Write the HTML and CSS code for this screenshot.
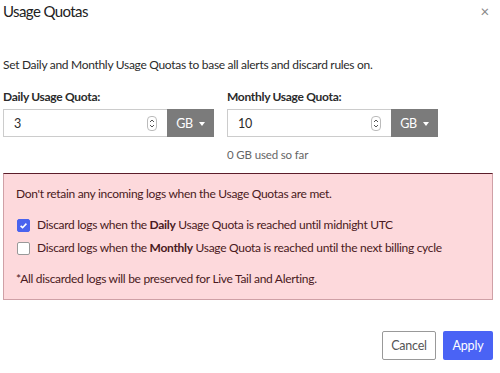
FILE: index.html
```html
<!DOCTYPE html>
<html lang="en">
<head>
    <meta charset="UTF-8">
    <title>Usage Quotas</title>
    <link rel="stylesheet" href="styles.css">
</head>
<body>
    <div class="modal">
        <div class="modal-header">
            <h2>Usage Quotas</h2>
            <span class="close">&times;</span>
        </div>

        <p class="intro">Set Daily and Monthly Usage Quotas to base all alerts and discard rules on.</p>

        <div class="quota-row">
            <div class="quota">
                <label>Daily Usage Quota:</label>
                <div class="input-group">
                    <div class="num-input">
                        <span>3</span>
                        <svg class="spin" width="10" height="15" viewBox="0 0 10 15">
                            <rect x="0.5" y="0.5" width="9" height="14" rx="3.5" fill="none" stroke="#bbb"/>
                            <path d="M3 6 L5 4 L7 6 M3 9 L5 11 L7 9" fill="none" stroke="#555" stroke-width="1"/>
                        </svg>
                    </div>
                    <button class="unit">GB <i class="caret"></i></button>
                </div>
            </div>
            <div class="quota">
                <label>Monthly Usage Quota:</label>
                <div class="input-group">
                    <div class="num-input">
                        <span>10</span>
                        <svg class="spin" width="10" height="15" viewBox="0 0 10 15">
                            <rect x="0.5" y="0.5" width="9" height="14" rx="3.5" fill="none" stroke="#bbb"/>
                            <path d="M3 6 L5 4 L7 6 M3 9 L5 11 L7 9" fill="none" stroke="#555" stroke-width="1"/>
                        </svg>
                    </div>
                    <button class="unit">GB <i class="caret"></i></button>
                </div>
                <div class="used">0 GB used so far</div>
            </div>
        </div>

        <div class="alert">
            <p>Don't retain any incoming logs when the Usage Quotas are met.</p>
            <div class="check-list">
                <div class="check">
                    <span class="box checked">
                        <svg width="9" height="9" viewBox="0 0 9 9"><path d="M1.6 4.8 L3.6 6.7 L7.4 2.6" fill="none" stroke="#fff" stroke-width="1.6"/></svg>
                    </span>
                    <span>Discard logs when the <b>Daily</b> Usage Quota is reached until midnight UTC</span>
                </div>
                <div class="check">
                    <span class="box"></span>
                    <span>Discard logs when the <b>Monthly</b> Usage Quota is reached until the next billing cycle</span>
                </div>
            </div>
            <p>*All discarded logs will be preserved for Live Tail and Alerting.</p>
        </div>

        <div class="actions">
            <button class="btn cancel">Cancel</button>
            <button class="btn apply">Apply</button>
        </div>
    </div>
</body>
</html>
```

FILE: styles.css
```css
body {
    margin: 0;
    background-color: #fff;
    font-family: Lato, "Liberation Sans", sans-serif;
    font-size: 12px;
    letter-spacing: -0.3px;
    color: #2b2b2b;
}

.modal {
    width: 490px;
    padding: 0 7px 0 3px;
}

.modal-header {
    display: flex;
    justify-content: space-between;
    align-items: center;
    height: 22px;
}

.modal-header h2 {
    margin: 0;
    font-size: 15px;
    letter-spacing: -0.6px;
    font-weight: normal;
    color: #222;
}

.close {
    font-size: 15px;
    color: #888;
    margin-right: 4px;
}

.intro {
    margin: 35px 0 0;
    line-height: 16px;
}

.quota-row {
    display: flex;
    gap: 13px;
    margin-top: 16px;
}

.quota label {
    display: block;
    font-weight: bold;
    line-height: 16px;
    margin-bottom: 4px;
}

.input-group {
    display: flex;
    height: 28px;
}

.num-input {
    width: 164px;
    box-sizing: border-box;
    border: 1px solid #ccc;
    border-right: none;
    display: flex;
    align-items: center;
    justify-content: space-between;
    padding: 0 10px 0 10px;
    font-size: 12.5px;
}

.spin {
    display: block;
}

.unit {
    width: 47px;
    border: none;
    background-color: #7b7b7b;
    color: #fff;
    font-family: inherit;
    font-size: 12.5px;
    letter-spacing: -0.3px;
    padding: 0;
}

.caret {
    display: inline-block;
    vertical-align: middle;
    margin-left: 3px;
    border-left: 3.5px solid transparent;
    border-right: 3.5px solid transparent;
    border-top: 4px solid #fff;
}

.used {
    font-size: 11.5px;
    letter-spacing: -0.15px;
    color: #666;
    margin-top: 11px;
}

.alert {
    margin-top: 12px;
    background-color: #fdd9dc;
    border: 1px solid #cfa0a6;
    border-top-color: #5b1d2a;
    padding: 12px 12px 12px;
    color: #4a1a22;
    line-height: 16px;
}

.alert p {
    margin: 0;
}

.check-list {
    margin: 15px 0 15px 1px;
    display: flex;
    flex-direction: column;
    gap: 7px;
}

.check {
    display: flex;
    align-items: center;
    gap: 7px;
}

.box {
    width: 13px;
    height: 13px;
    box-sizing: border-box;
    border: 1px solid #999;
    border-radius: 2px;
    background-color: #fff;
    display: flex;
    align-items: center;
    justify-content: center;
}

.box.checked {
    background-color: #4a63ee;
    border-color: #4a63ee;
}

.actions {
    display: flex;
    justify-content: flex-end;
    gap: 7px;
    margin-top: 31px;
}

.btn {
    height: 29px;
    font-family: inherit;
    font-size: 12.5px;
    letter-spacing: -0.2px;
    border-radius: 2px;
    cursor: pointer;
}

.cancel {
    width: 54px;
    background-color: #fff;
    border: 1px solid #999;
    color: #555;
}

.apply {
    width: 50px;
    background-color: #4a63f5;
    border: none;
    color: #fff;
}
```
